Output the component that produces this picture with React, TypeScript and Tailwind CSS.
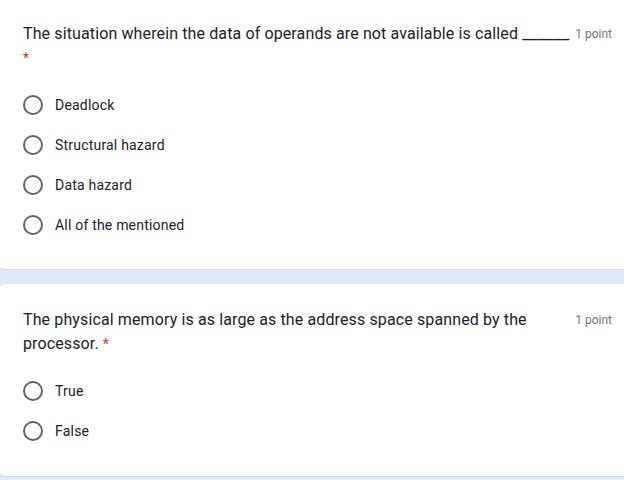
import React from 'react';

interface Question {
  title: React.ReactNode;
  options: string[];
}

const questions: Question[] = [
  {
    title: (
      <>
        The situation wherein the data of operands are not available is called{' '}
        <span className="text-[17.5px] leading-none tracking-[0px]">______</span>
      </>
    ),
    options: ['Deadlock', 'Structural hazard', 'Data hazard', 'All of the mentioned'],
  },
  {
    title: 'The physical memory is as large as the address space spanned by the processor.',
    options: ['True', 'False'],
  },
];

const Radio: React.FC = () => (
  <div className="w-5 h-5 shrink-0 rounded-full border-2 border-[#5f6368]" />
);

const QuestionCard: React.FC<{ q: Question; className?: string }> = ({ q, className = '' }) => (
  <div
    className={`-ml-[2px] w-[640px] bg-white border-b border-[#d3d8de] pl-[25px] pr-[26px] ${className}`}
  >
    <div className="flex items-start">
      <div
        className="flex-1 text-[16px] leading-6 text-[#202124] tracking-[0.12px]"
        style={{ fontFamily: 'Roboto, "Liberation Sans", sans-serif' }}
      >
        {q.title}{' '}
        <span className="text-[#d93025] text-[14px] align-top">*</span>
      </div>
      <div className="shrink-0 text-[12px] leading-6 text-[#70757a] font-['Roboto',sans-serif]">
        1 point
      </div>
    </div>
    <div className="mt-[15px] flex flex-col">
      {q.options.map((opt) => (
        <label key={opt} className="h-10 flex items-center gap-3">
          <Radio />
          <span className="text-[14px] text-[#202124] tracking-[0.2px] font-['Roboto',sans-serif]">
            {opt}
          </span>
        </label>
      ))}
    </div>
  </div>
);

export default function App() {
  return (
    <div className="w-[624px] h-[480px] overflow-hidden bg-[#e0eaf7]">
      <QuestionCard q={questions[0]} className="pt-[22px] pb-6 rounded-bl-lg" />
      <div className="h-[14px]" />
      <QuestionCard q={questions[1]} className="pt-6 pb-[25px] rounded-l-lg" />
    </div>
  );
}
